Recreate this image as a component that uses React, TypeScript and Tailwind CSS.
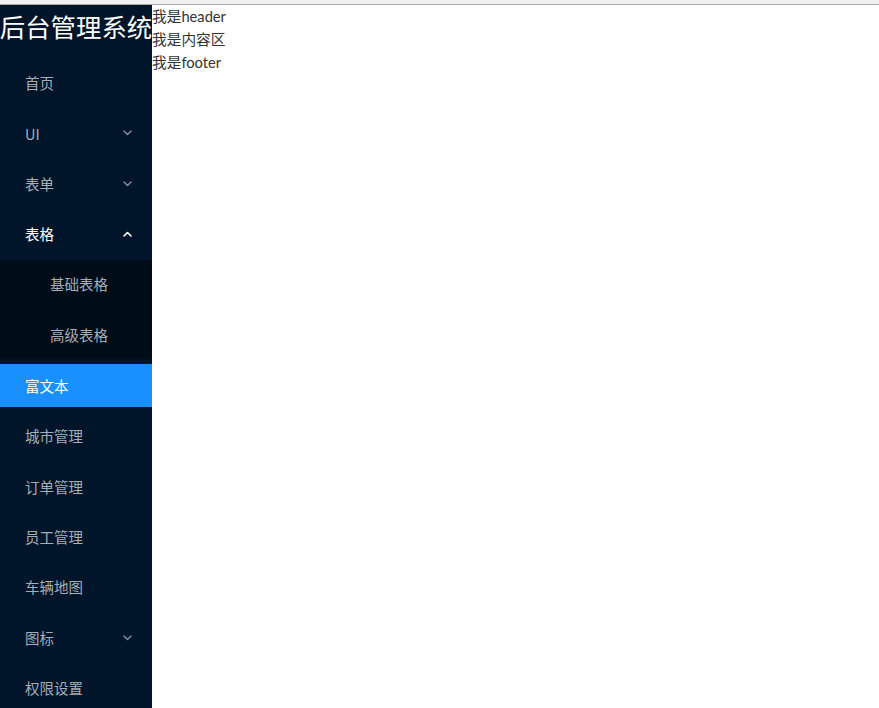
import React from "react";

const font = { fontFamily: '"Noto Sans CJK SC", "Noto Sans", sans-serif' };
const mainFont = { fontFamily: 'Lato, "Noto Sans CJK SC", sans-serif' };

function Chevron({ up }: { up?: boolean }) {
  return (
    <svg
      width="9"
      height="6"
      viewBox="0 0 9 6"
      className={up ? "text-white" : "text-[#7d8894]"}
    >
      <path
        d={up ? "M1 5 L4.5 1.5 L8 5" : "M1 1 L4.5 4.5 L8 1"}
        fill="none"
        stroke="currentColor"
        strokeWidth="1.6"
        strokeLinecap="round"
        strokeLinejoin="round"
      />
    </svg>
  );
}

interface ItemProps {
  label: string;
  arrow?: "up" | "down";
  active?: boolean;
  open?: boolean;
  sub?: boolean;
}

function Item({ label, arrow, active, open, sub }: ItemProps) {
  return (
    <div
      className={
        "flex h-[43px] items-center justify-between pr-[20px] text-[14.5px] " +
        (sub ? "pl-[50px] " : "pl-[25px] ") +
        (active
          ? "bg-[#1890ff] text-white"
          : open
            ? "text-white"
            : "text-[#a6adb4]")
      }
    >
      <span>{label}</span>
      {arrow ? <Chevron up={arrow === "up"} /> : null}
    </div>
  );
}

export default function App() {
  return (
    <div className="min-h-screen bg-white" style={font}>
      <div className="h-[4px] bg-[#f1f1f1]" />
      <div className="h-px bg-[#a9a9a9]" />
      <div className="flex">
        <aside className="min-h-[703px] w-[152px] shrink-0 bg-[#001529]">
          <div className="flex h-[43px] items-center justify-center whitespace-nowrap text-[25.4px] leading-none text-white">
            后台管理系统
          </div>
          <nav className="mt-[13.5px] flex flex-col gap-[7.4px]">
            <Item label="首页" />
            <Item label="UI" arrow="down" />
            <Item label="表单" arrow="down" />
            <div className="flex flex-col">
              <Item label="表格" arrow="up" open />
              <div className="-mb-[2.4px] mt-[4.5px] flex flex-col gap-[8px] bg-[#000c17] py-[2.5px]">
                <Item label="基础表格" sub />
                <Item label="高级表格" sub />
              </div>
            </div>
            <Item label="富文本" active />
            <Item label="城市管理" />
            <Item label="订单管理" />
            <Item label="员工管理" />
            <Item label="车辆地图" />
            <Item label="图标" arrow="down" />
            <Item label="权限设置" />
          </nav>
        </aside>
        <main
          className="flex-1 text-[14.7px] leading-[23px] text-[#333]"
          style={mainFont}
        >
          <div>我是header</div>
          <div>我是内容区</div>
          <div>我是footer</div>
        </main>
      </div>
    </div>
  );
}
